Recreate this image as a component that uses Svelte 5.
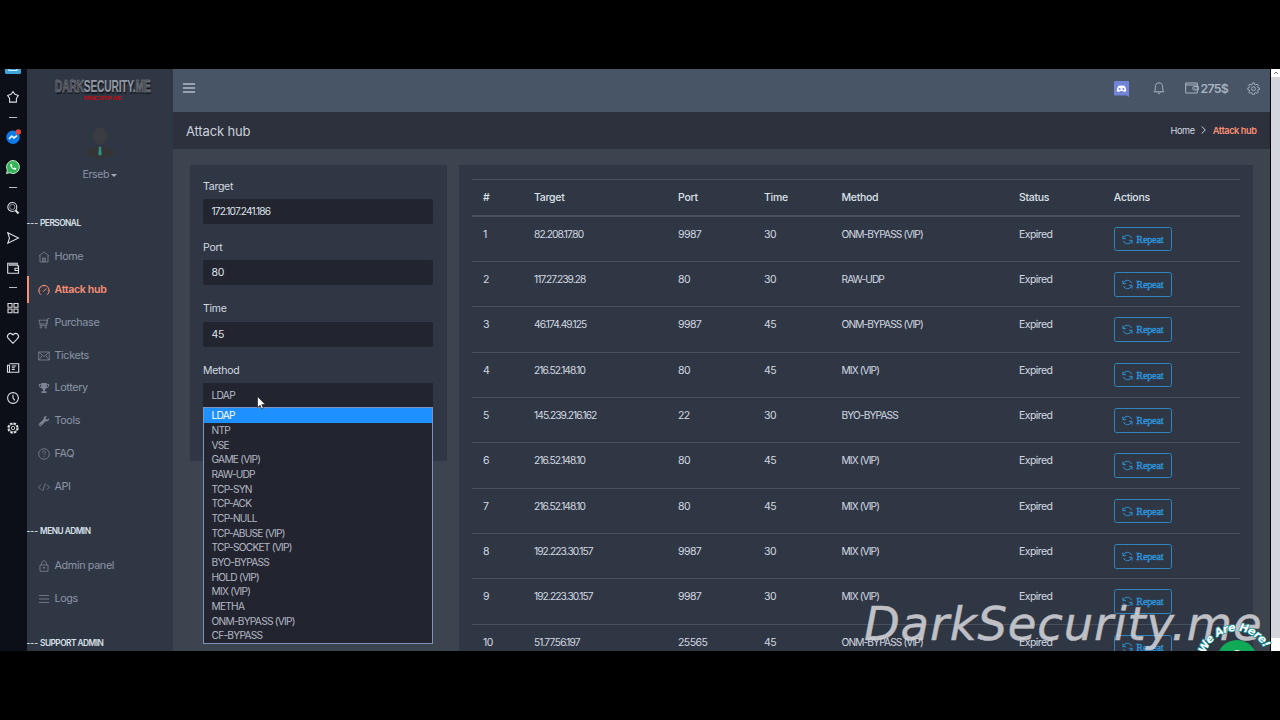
<script>
  const personal = [
    { label: 'Home', icon: 'home' },
    { label: 'Attack hub', icon: 'gauge', active: true },
    { label: 'Purchase', icon: 'cart' },
    { label: 'Tickets', icon: 'mail' },
    { label: 'Lottery', icon: 'trophy' },
    { label: 'Tools', icon: 'wrench' },
    { label: 'FAQ', icon: 'help' },
    { label: 'API', icon: 'code' }
  ];

  const admin = [
    { label: 'Admin panel', icon: 'lock' },
    { label: 'Logs', icon: 'lines' }
  ];

  const rail = [
    'star', 'dash', 'messenger', 'whatsapp', 'dash', 'search', 'send', 'wallet',
    'dash', 'grid', 'heart', 'news', 'clock', 'gear'
  ];

  const methods = [
    'LDAP', 'NTP', 'VSE', 'GAME (VIP)', 'RAW-UDP', 'TCP-SYN', 'TCP-ACK', 'TCP-NULL',
    'TCP-ABUSE (VIP)', 'TCP-SOCKET (VIP)', 'BYO-BYPASS', 'HOLD (VIP)', 'MIX (VIP)',
    'METHA', 'ONM-BYPASS (VIP)', 'CF-BYPASS'
  ];

  const fields = [
    { label: 'Target', value: '172.107.241.186', ip: true },
    { label: 'Port', value: '80' },
    { label: 'Time', value: '45' }
  ];

  const rows = [
    { target: '82.208.17.80', port: 9987, time: 30, method: 'ONM-BYPASS (VIP)' },
    { target: '117.27.239.28', port: 80, time: 30, method: 'RAW-UDP' },
    { target: '46.174.49.125', port: 9987, time: 45, method: 'ONM-BYPASS (VIP)' },
    { target: '216.52.148.10', port: 80, time: 45, method: 'MIX (VIP)' },
    { target: '145.239.216.162', port: 22, time: 30, method: 'BYO-BYPASS' },
    { target: '216.52.148.10', port: 80, time: 45, method: 'MIX (VIP)' },
    { target: '216.52.148.10', port: 80, time: 45, method: 'MIX (VIP)' },
    { target: '192.223.30.157', port: 9987, time: 30, method: 'MIX (VIP)' },
    { target: '192.223.30.157', port: 9987, time: 30, method: 'MIX (VIP)' },
    { target: '51.77.56.197', port: 25565, time: 45, method: 'ONM-BYPASS (VIP)' }
  ];

  let selected = 'LDAP';
</script>

{#snippet menuItem(item)}
  <a class="item" class:active={item.active} href="#top">
    <svg viewBox="0 0 12 12" width="12" height="12">
      {#if item.icon === 'home'}
        <path d="M.8 5.2 6 1l5.2 4.2M2 4.6V11h8V4.6M4.6 11V7h2.8v4M5.9 7v4" />
      {:else if item.icon === 'gauge'}
        <path d="M3 10.8A5.2 5.2 0 1 1 9 10.8M5.2 7.6 8.4 4.4M3 3.5l.6.6M1.3 6.7h1M9.7 6.7h1M6 1.8v.8" />
      {:else if item.icon === 'cart'}
        <path d="M.6 3.2h8.6L8.7 7H2L1.3 3.2M2 7v1.6h6.7l1-7h1.8" />
        <circle cx="3" cy="10.4" r=".8" /><circle cx="7.8" cy="10.4" r=".8" />
      {:else if item.icon === 'mail'}
        <path d="M.7 2h10.6v8H.7zM.7 2 6 6.6 11.3 2M.7 10l3.6-4.5M11.3 10 7.7 5.5" />
      {:else if item.icon === 'trophy'}
        <path class="solid" d="M3.2 1h5.6v1h2.4c0 2.5-1 4-2.8 4.1C7.9 7 7.3 7.5 6.8 7.7v1.5h1.7V11h-5V9.2h1.7V7.7C4.7 7.5 4.1 7 3.6 6.1 1.8 6 .8 4.5.8 2h2.4zM1.7 2.8c.1 1.2.6 2 1.5 2.3V2.8zm7.1 0v2.3c.9-.3 1.4-1.1 1.5-2.3z" />
      {:else if item.icon === 'wrench'}
        <path class="solid" d="M11 3.3 9 4.8 7.4 3.2 8.8 1.2C7 .7 5.3 2.1 5.6 4.2L1 8.700c-1.1 1.4.8 3.2 2.2 2.1L7.7 6.3c2.2.4 3.8-1.1 3.3-3zM2.2 9.1a.5.5 0 1 1 0 1 .5.5 0 0 1 0-1z" />
      {:else if item.icon === 'help'}
        <circle cx="6" cy="6" r="5.3" />
        <path d="M4.4 4.8C4.4 2.5 7.7 2.6 7.6 4.6 7.5 5.7 6 5.7 6 7.2M6 8.2v1" />
      {:else if item.icon === 'code'}
        <path d="M3.2 3.5.6 6.2l2.6 2.6M8.8 3.5l2.6 2.7-2.6 2.6M7.3 2.5 4.7 10" />
      {:else if item.icon === 'lock'}
        <path d="M2 5h8v6.3H2zM3.7 5V3.1c0-3 4.6-3 4.6 0V5M6 7v2M5.2 7.5h1.6" />
      {:else}
        <path d="M1 2.5h10M1 6h10M1 9.5h10" />
      {/if}
    </svg>
    <span>{item.label}</span>
  </a>
{/snippet}

<div class="screen">
  <div class="window">
    <nav class="rail">
      <div class="slot first">
        <svg viewBox="0 0 16 12" width="16" height="12">
          <rect width="16" height="12" rx="1.5" fill="#41a4d8" stroke="none" />
          <path d="M4 4.5v4h8v-4" stroke="#d7eefb" />
        </svg>
      </div>
      {#each rail as icon}
        <div class="slot" class:dash={icon === 'dash'}>
          {#if icon === 'dash'}
            <i></i>
          {:else}
            <svg viewBox="0 0 16 16" width="16" height="16">
              {#if icon === 'star'}
                <path d="m8 2.7 2 2.6 3.3 1.3-1.9 2.9v3.6H4.6V9.5L2.7 6.600 6 5.300z" />
              {:else if icon === 'messenger'}
                <circle cx="8" cy="8.3" r="6.7" fill="#0d7ae8" stroke="none" />
                <path d="m4 10 2.7-3 2.2 1.9L12 6.7" stroke="#fff" stroke-width="1.6" />
                <circle cx="13.3" cy="2.9" r="2.7" fill="#ee4235" stroke="none" />
              {:else if icon === 'whatsapp'}
                <path d="M8 1.5a6.5 6.5 0 1 1-3.2 12.2L1.5 14.5l.9-3.3A6.5 6.5 0 0 1 8 1.5z" fill="#35b457" stroke="#d7f3de" stroke-width=".9" />
                <path d="M5.7 4.8c-1 1.2-.2 3 1.2 4.4 1.5 1.5 3.2 2 4.2 1l.1-1-1.6-.8-.9.8C7.5 8.7 7 8 6.7 7.2l.7-.8-.7-1.6z" fill="#fff" stroke="none" />
              {:else if icon === 'search'}
                <circle cx="7.3" cy="7" r="4.5" /><circle cx="7.3" cy="7" r="2.6" stroke-width=".6" />
                <path d="m10.5 10.3 3 3.2" stroke-width="2" />
              {:else if icon === 'send'}
                <path d="M2.8 2.8 13.5 8 2.8 13.3 4.5 8z" />
              {:else if icon === 'wallet'}
                <path d="M2.7 3.3h9.5v2.4h1.3v7.5H2.7z" /><path d="M3 3.8h9V6H4z" fill="#9b9da2" stroke="none" />
                <path d="M13.5 8.3H10v2.2h3.5" />
              {:else if icon === 'grid'}
                <path d="M3 3.5h4v3.7H3zM9 3.5h4v3.7H9zM3 9h4v3.7H3zM9 9h4v3.7H9z" />
              {:else if icon === 'heart'}
                <path d="M8 13.3 3.3 8.5C.8 5.5 4.8 1 8 4.9c3.2-3.9 7.2.6 4.7 3.6z" />
              {:else if icon === 'news'}
                <path d="M4.5 3.7h9.2v8.6H2.5v-7h2v6.5M6.8 6h4.5M6.8 7.8h3M6.8 9.5h3" />
              {:else if icon === 'clock'}
                <circle cx="8" cy="8" r="5.4" /><path d="M8 4.8V8l1.8 2.3" />
              {:else}
                <circle cx="8" cy="8" r="4.9" stroke-width="1.5" stroke-dasharray="2.55 1.3" /><circle cx="8" cy="8" r="4" stroke-width=".8" /><circle cx="8" cy="8" r="1.7" stroke-width=".9" />
              {/if}
            </svg>
          {/if}
        </div>
      {/each}
    </nav>

    <aside class="sidebar">
      <div class="logo">
        <div class="name"><span>DARK</span>SECURITY.<span>ME</span></div>
        <div class="tag">PANIC STOP . ME</div>
      </div>
      <div class="user">
        <svg class="avatar" viewBox="0 0 30 32" width="30" height="32">
          <ellipse cx="15" cy="9" rx="7.2" ry="8.5" fill="#3a3c41" />
          <path d="M0 25c1-3 7-4 11-6h8c4 2 10 3 11 6-3 8-27 8-30 0z" fill="#343437" />
          <path d="M13.5 20.5 15 19.5l1.5 1-.5 1.500.8 5L15 29l-1.800-2 .8-5z" fill="#2a9288" />
        </svg>
        <span class="username">Erseb <b></b></span>
      </div>
      <h6><i>---</i> PERSONAL</h6>
      {#each personal as item}
        {@render menuItem(item)}
      {/each}
      <h6 class="later"><i>---</i> MENU ADMIN</h6>
      {#each admin as item}
        {@render menuItem(item)}
      {/each}
      <h6 class="later"><i>---</i> SUPPORT ADMIN</h6>
    </aside>

    <main>
      <header class="topbar">
        <svg class="burger" viewBox="0 0 12 12" width="12" height="12"><path d="M0 2h12M0 6h12M0 10h12" /></svg>
        <div class="tools">
          <svg class="discord" viewBox="0 0 15 16" width="15" height="16">
            <path d="M1 0h13q1 0 1 1v15l-2-1.5H1q-1 0-1-1V1q0-1 1-1z" fill="#7184d8" />
            <path d="M4.5 4.8q3-.8 6 0Q12.3 7 12.3 10q-1.3 1-2.4.9l-.7-.9H5.8l-.7.9Q4 11 2.700 10 2.700 7 4.500 4.800z" fill="#fff" />
            <circle cx="5.7" cy="7.9" r="1" fill="#7184d8" /><circle cx="9.3" cy="7.9" r="1" fill="#7184d8" />
          </svg>
          <svg class="bell" viewBox="0 0 12 14" width="12" height="14">
            <path d="M1 10.8h10c-2-1.7-1-4-1.5-6.3C8.7 1 3.3 1 2.5 4.5 2 6.8 3 9.1 1 10.8zM4.6 11.5c.3 1.3 2.5 1.3 2.8 0" />
          </svg>
          <svg class="purse" viewBox="0 0 14 12" width="14" height="12">
            <path d="M.7 1h11.6v10H.7zM.7 3h11.6M13.3 4.5H8.5q-1.7 1.7 0 3.4h4.8zM9.2 6.2h1" />
          </svg>
          <span class="balance">275$</span>
          <svg class="cog" viewBox="0 0 14 14" width="13" height="13">
            <path d="m6 1-.4 1.7-1.2.5L3 2.2 1.7 3.5l1 1.5-.5 1.1L.8 6.4v1.7l1.5.3.5 1.2-1 1.4L3 12.3l1.5-.9 1.1.4L6 13.4h2l.3-1.6 1.2-.4 1.5.9 1.2-1.3-.9-1.4.5-1.2 1.6-.3V6.4l-1.6-.3L11.3 5l.9-1.5L11 2.2l-1.5 1-1.2-.5L8 1z" />
            <circle cx="7" cy="7.2" r="2.1" />
          </svg>
        </div>
      </header>

      <div class="titlebar">
        <h1>Attack hub</h1>
        <div class="crumbs">
          <span>Home</span>
          <svg viewBox="0 0 5 8" width="5" height="8"><path d="m.8.5 3.5 3.5L.8 7.5" /></svg>
          <span class="here">Attack hub</span>
        </div>
      </div>

      <div class="content">
        <section class="card form">
          {#each fields as field}
            <label>{field.label}</label>
            <div class="input" class:ip={field.ip}>{field.value}</div>
          {/each}
          <label>Method</label>
          <div class="input select">
            {selected}
            <ul class="options">
              {#each methods as method}
                <li class:selected={method === selected}>{method}</li>
              {/each}
            </ul>
          </div>
        </section>

        <section class="card history">
          <div class="row head">
            <span>#</span>
            <span>Target</span>
            <span>Port</span>
            <span>Time</span>
            <span>Method</span>
            <span>Status</span>
            <span>Actions</span>
          </div>
          {#each rows as row, i}
            <div class="row">
              <span>{i + 1}</span>
              <span class="ip">{row.target}</span>
              <span>{row.port}</span>
              <span>{row.time}</span>
              <span class="method">{row.method}</span>
              <span>Expired</span>
              <button>
                <svg viewBox="0 0 12 12" width="11" height="11">
                  <path d="M1.5 5C2.5.3 9 .3 10.5 4.5M1 1.5v3.6h3.5M10.5 7c-1 4.7-7.5 4.7-9 .5M11 10.5V6.9H7.5" />
                </svg>
                Repeat
              </button>
            </div>
          {/each}
        </section>
      </div>
    </main>

    <div class="scrollbar">
      <svg viewBox="0 0 10 8" width="10" height="8"><path d="m3 5 2-2 2 2" /></svg>
      <div class="thumb"></div>
    </div>

    <div class="watermark">DarkSecurity.me</div>
    <svg class="chat" viewBox="0 0 84 40" width="84" height="40">
      <circle cx="42" cy="48" r="20" fill="#0fa958" />
      <circle cx="42" cy="42" r="4" fill="#fff" />
      <path id="arc" d="M9 51a32 32 0 0 1 64 0" />
      <text><textPath href="#arc" startOffset="9">We Are Here!</textPath></text>
    </svg>
    <svg class="cursor" viewBox="0 0 9 14" width="9" height="14">
      <path d="M.5.5v11l2.6-2.3 1.6 3.7 1.7-.7-1.6-3.6h3.5z" fill="#fff" stroke="#111" stroke-width=".6" />
    </svg>
  </div>
</div>

<style>
  :global(body) {
    background: #000;
    overflow: hidden;
  }

  .screen {
    box-sizing: border-box;
    height: 720px;
    padding: 69px 0;
    background: #000;
    font-family: Inter, "Open Sans", sans-serif;
    font-size: 10.5px;
    color: #d3d9e2;
  }

  .window {
    position: relative;
    display: flex;
    height: 582px;
    overflow: hidden;
    background: #3b444f;
  }

  svg {
    display: block;
    flex: none;
    fill: none;
    stroke: currentColor;
  }

  .rail {
    width: 26.5px;
    flex: none;
    background: #0c0f17;
    color: #dcdfe2;
  }

  .slot {
    height: 30px;
    display: flex;
    align-items: center;
    justify-content: center;
  }

  .slot svg {
    stroke-width: 1.1;
  }

  .slot.first {
    height: 13px;
    align-items: flex-start;
  }

  .slot.first svg {
    margin-top: -7px;
  }

  .slot.dash {
    height: 10.4px;
  }

  .slot.dash i {
    width: 8px;
    height: 1px;
    background: #b9bcc1;
  }

  .sidebar {
    width: 146.5px;
    flex: none;
    background: #303744;
    color: #8b94a6;
  }

  .logo {
    height: 42px;
    padding: 9px 0 0 5px;
    box-sizing: border-box;
    text-align: center;
  }

  .name {
    font: 700 17px/17px "Liberation Sans", sans-serif;
    color: #9298a3;
    text-shadow: 1px 2px 1px #15181e;
    transform: scaleX(0.6);
    margin: 0 -30px;
    letter-spacing: -0.3px;
  }

  .name span {
    color: #41454d;
    -webkit-text-stroke: 0.6px #8d929b;
  }

  .tag {
    font: 700 6px/6px "Liberation Sans", sans-serif;
    color: #ba0d18;
    letter-spacing: -0.85px;
  }

  .user {
    height: 94px;
    padding-top: 16px;
    box-sizing: border-box;
    display: flex;
    flex-direction: column;
    align-items: center;
  }

  .avatar,
  .discord {
    stroke: none;
  }

  .username {
    margin-top: 8px;
    line-height: 16px;
    display: flex;
    align-items: center;
    gap: 2px;
    letter-spacing: -0.35px;
  }

  .username b {
    border: 3px solid transparent;
    border-top-color: #a3abb9;
    border-bottom: 0;
  }

  h6 {
    margin: 0;
    height: 35px;
    display: flex;
    align-items: center;
    gap: 1.5px;
    color: #d9e0ea;
    font-size: 8.3px;
    font-weight: 600;
    white-space: nowrap;
    letter-spacing: -0.5px;
  }

  h6 i {
    font-style: normal;
    width: 12px;
    letter-spacing: 0;
  }

  .later {
    margin-top: 11.6px;
  }

  .item {
    height: 32.75px;
    display: flex;
    align-items: center;
    gap: 5px;
    padding-left: 11px;
    color: #8b94a6;
    text-decoration: none;
    font-size: 10.8px;
    letter-spacing: -0.37px;
  }

  .item span {
    padding-top: 1px;
  }

  .item svg {
    stroke-width: 0.8;
    color: #7d8594;
    margin-top: 2px;
  }

  .item .solid {
    fill: currentColor;
    stroke: none;
  }

  .item.active {
    color: #f98e73;
    font-weight: 600;
    font-size: 10.6px;
    letter-spacing: -0.32px;
    background: linear-gradient(#f98e73, #f98e73) 0 50% / 2px 27px no-repeat;
  }

  .item.active span {
    padding-top: 0;
  }

  .item.active svg {
    color: #f98e73;
    stroke-width: 1;
  }

  main {
    flex: 1;
    min-width: 0;
  }

  .topbar {
    height: 42.5px;
    box-sizing: border-box;
    padding: 0 10px 4px 10px;
    display: flex;
    align-items: center;
    justify-content: space-between;
    background: #485566;
    color: #a9b2c0;
  }

  .burger {
    stroke-width: 1.8;
    color: #97a1b0;
  }

  .tools {
    display: flex;
    align-items: center;
  }

  .discord {
    margin-top: 2px;
  }

  .bell {
    margin: 0 19.5px 0 24.5px;
  }

  .balance {
    width: 46px;
    padding-left: 2px;
    font-size: 12.3px;
    font-weight: 600;
    letter-spacing: -0.7px;
  }

  .titlebar {
    height: 37.5px;
    display: flex;
    align-items: center;
    justify-content: space-between;
    padding: 0 13px;
    background: #2d303d;
  }

  h1 {
    margin: 1px 0 0;
    font-size: 13px;
    font-weight: 400;
    letter-spacing: -0.15px;
    color: #cbd2dc;
  }

  .crumbs {
    display: flex;
    align-items: center;
    gap: 6.5px;
    font-size: 9.2px;
    letter-spacing: -0.35px;
  }

  .here {
    color: #f98e73;
    font-weight: 600;
    letter-spacing: -0.42px;
  }

  .content {
    display: flex;
    align-items: flex-start;
    gap: 12px;
    padding: 16px 17px 0 17px;
  }

  .card {
    background: #303744;
    box-sizing: border-box;
  }

  .form {
    width: 257px;
    height: 296px;
    padding: 10.5px 14.5px 0 13px;
  }

  label {
    display: block;
    height: 23.5px;
    line-height: 21px;
    letter-spacing: -0.25px;
  }

  .input {
    position: relative;
    height: 24.8px;
    margin-bottom: 13.1px;
    padding-left: 8.5px;
    line-height: 25px;
    border-radius: 2px;
    background: #222430;
    color: #dfe3e9;
    letter-spacing: -0.3px;
  }

  .input.ip {
    font-size: 10.2px;
    letter-spacing: -0.85px;
  }

  .select {
    color: #b9bec8;
    border-radius: 0;
    font-size: 10.2px;
    letter-spacing: -0.7px;
  }

  .options {
    position: absolute;
    left: 0;
    right: -0.5px;
    top: 24.2px;
    margin: 0;
    padding: 0;
    list-style: none;
    border: 1px solid #7d92bd;
    background: #222430;
  }

  .options li {
    height: 14.67px;
    line-height: 14.2px;
    padding-left: 7.5px;
    color: #b4b8c2;
    letter-spacing: -0.76px;
  }

  .options .selected {
    background: #1e90ff;
    color: #fff;
  }

  .history {
    flex: 1;
    padding: 14px 13px 0;
    height: 500px;
  }

  .row {
    display: grid;
    grid-template-columns: 51px 144px 86px 77.5px 177.5px 94.8px 1fr;
    align-items: start;
    height: 45.33px;
    box-sizing: border-box;
    padding: 10px 0 0 11px;
    border-top: 1px solid #48505e;
    line-height: 15px;
    letter-spacing: -0.55px;
  }

  .row.head {
    height: 36.8px;
    padding-top: 10.4px;
    border-bottom: 1px solid #48505e;
    font-weight: 500;
    letter-spacing: -0.28px;
    color: #dce1e9;
  }

  .row .ip {
    font-size: 10.2px;
    letter-spacing: -0.92px;
  }

  .row .method {
    font-size: 10.2px;
    letter-spacing: -0.88px;
  }

  button {
    width: 58px;
    height: 24.5px;
    padding: 0 0 0 7px;
    box-sizing: border-box;
    display: flex;
    align-items: center;
    gap: 3.5px;
    border: 1px solid #2f84bd;
    border-radius: 2.5px;
    background: transparent;
    color: #2d96dd;
    font: 10.2px "Liberation Serif", serif;
    letter-spacing: -0.2px;
    -webkit-text-stroke: 0.35px #2d96dd;
  }

  .scrollbar {
    width: 10.5px;
    flex: none;
    box-sizing: border-box;
    border-left: 1px solid #08090c;
    background: #fff;
    color: #777;
  }

  .thumb {
    height: 561px;
    background: #d3d4dc;
  }

  .chat {
    position: absolute;
    left: 1195px;
    top: 543px;
  }

  .chat circle,
  .chat path {
    stroke: none;
  }

  .chat text {
    font: italic 700 11px "DejaVu Sans", sans-serif;
    letter-spacing: -0.6px;
    fill: #fff;
    stroke: #15949b;
    stroke-width: 1.4px;
    paint-order: stroke;
  }

  .watermark {
    position: absolute;
    left: 864px;
    top: 528px;
    font: italic 46.5px/54px "DejaVu Sans", sans-serif;
    letter-spacing: 0.8px;
    white-space: nowrap;
    color: #d2d3d8;
    -webkit-text-stroke: 0.5px #d2d3d8;
    opacity: 0.88;
  }

  .cursor {
    position: absolute;
    left: 257px;
    top: 327px;
  }
</style>
